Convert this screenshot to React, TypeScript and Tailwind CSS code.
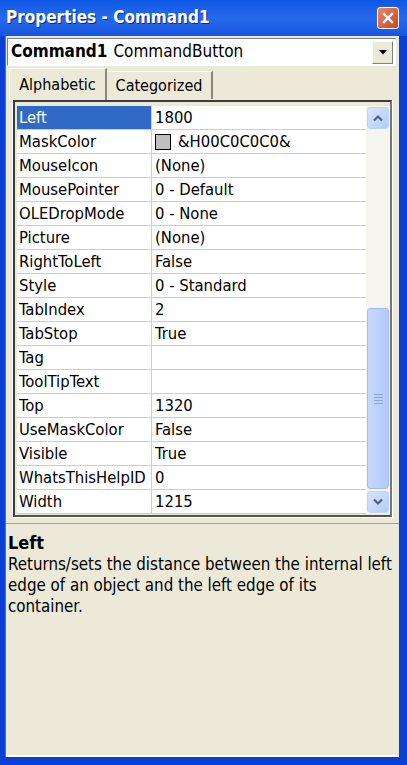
import React from "react";

const rows: [string, string][] = [
  ["Left", "1800"],
  ["MaskColor", "&H00C0C0C0&"],
  ["MouseIcon", "(None)"],
  ["MousePointer", "0 - Default"],
  ["OLEDropMode", "0 - None"],
  ["Picture", "(None)"],
  ["RightToLeft", "False"],
  ["Style", "0 - Standard"],
  ["TabIndex", "2"],
  ["TabStop", "True"],
  ["Tag", ""],
  ["ToolTipText", ""],
  ["Top", "1320"],
  ["UseMaskColor", "False"],
  ["Visible", "True"],
  ["WhatsThisHelpID", "0"],
  ["Width", "1215"],
];

function Chevron({ up }: { up?: boolean }) {
  return (
    <svg width="12" height="8" viewBox="0 0 12 8">
      <path
        d={up ? "M2 6.5 L6 2.5 L10 6.5" : "M2 1.5 L6 5.5 L10 1.5"}
        fill="none"
        stroke="#4d6185"
        strokeWidth="2.2"
      />
    </svg>
  );
}

export default function App() {
  return (
    <div
      className="w-[407px] h-[765px] bg-[#0a3fd6] flex flex-col overflow-hidden"
      style={{ fontFamily: "'DejaVu Sans Condensed', 'Liberation Sans', sans-serif" }}
    >
      {/* Title bar */}
      <div className="h-[36px] shrink-0 flex items-center justify-between pl-[6px] pr-[8px] bg-gradient-to-b from-[#0b58e4] via-[#2769ec] to-[#1656e0]">
        <span
          className="text-white font-bold text-[17px]"
          style={{ textShadow: "1px 1px 0 #0a2a8a" }}
        >
          Properties - Command1
        </span>
        <div className="w-[22px] h-[22px] rounded-[3px] border border-white bg-gradient-to-br from-[#e8866a] to-[#c9461f] flex items-center justify-center">
          <svg width="12" height="12" viewBox="0 0 12 12">
            <path d="M2 2 L10 10 M10 2 L2 10" stroke="white" strokeWidth="2.4" strokeLinecap="square" />
          </svg>
        </div>
      </div>

      {/* Body */}
      <div className="flex-1 ml-[5px] mr-[8px] mb-[8px] bg-[#ece9d8] flex flex-col border-l border-[#4a6fe0]">
        {/* Object dropdown */}
        <div className="mt-[2px] ml-[1px] mr-[3px] h-[28px] bg-white border border-[#7f7f7f] border-r-white border-b-white flex items-center">
          <div className="flex-1 flex items-center pl-[3px] text-[17px] text-black">
            <span className="font-bold">Command1</span>
            <span className="ml-[6px]">CommandButton</span>
          </div>
          <div className="w-[21px] h-[23px] mr-[2px] bg-[#ece9d8] border border-white border-r-[#808080] border-b-[#808080] flex items-center justify-center">
            <svg width="8" height="5" viewBox="0 0 8 5">
              <path d="M0 0 H8 L4 4.5 Z" fill="#000" />
            </svg>
          </div>
        </div>

        {/* Tabs */}
        <div className="flex items-end h-[34px] pl-[3px]">
          <div className="h-[32px] w-[98px] border-t border-l border-white border-r-2 border-r-[#8a877c] flex items-center justify-center text-[16px] text-black bg-[#ece9d8] relative z-10">
            Alphabetic
          </div>
          <div className="h-[28px] w-[106px] border-t border-white border-r-2 border-r-[#8a877c] flex items-center justify-center text-[16px] text-black mb-[1px]">
            Categorized
          </div>
        </div>

        {/* Grid */}
        <div className="ml-[6px] mr-[6px] border border-white border-t-0">
          <div className="border-2 border-[#3c3c3c] border-r-[#777] border-b-[#555] bg-[#ece9d8] pl-[2px] pt-[4px] pb-[1px] flex">
            <div className="flex-1 bg-white">
              {rows.map(([name, value], i) => (
                <div key={name} className="h-[24px] flex border-b border-[#cfcdc4] text-[16.5px] leading-[23px]">
                  <div
                    className={
                      i === 0
                        ? "w-[134px] pl-[2px] bg-[#3169c6] text-white whitespace-nowrap overflow-hidden"
                        : "w-[134px] pl-[2px] text-black whitespace-nowrap overflow-hidden"
                    }
                  >
                    {name}
                  </div>
                  <div className="w-px bg-[#cfcdc4]" />
                  <div className="flex-1 pl-[3px] text-black flex items-center">
                    {name === "MaskColor" && (
                      <span className="inline-block w-[16px] h-[16px] bg-[#c0c0c0] border border-black mr-[7px]" />
                    )}
                    {value}
                  </div>
                </div>
              ))}
            </div>
            {/* Scrollbar */}
            <div className="w-[24px] bg-[#f6f5f0] flex flex-col items-center py-[1px]">
              <div className="w-[22px] h-[22px] rounded-[3px] bg-gradient-to-br from-[#d6e4fd] to-[#b6cdf9] border border-[#c2d3f7] flex items-center justify-center">
                <Chevron up />
              </div>
              <div className="flex-1" />
              <div className="w-[22px] h-[181px] rounded-[3px] bg-gradient-to-r from-[#c5d7fb] via-[#bdd1fb] to-[#b3c9f7] border border-[#a6bcec] flex flex-col items-center justify-center gap-[2px]">
                <div className="w-[9px] h-px bg-[#8ea6d8]" />
                <div className="w-[9px] h-px bg-[#8ea6d8]" />
                <div className="w-[9px] h-px bg-[#8ea6d8]" />
                <div className="w-[9px] h-px bg-[#8ea6d8]" />
              </div>
              <div className="w-[22px] h-[22px] mt-[2px] rounded-[3px] bg-gradient-to-br from-[#d6e4fd] to-[#b6cdf9] border border-[#c2d3f7] flex items-center justify-center">
                <Chevron />
              </div>
            </div>
          </div>
        </div>

        {/* Description */}
        <div className="mt-[5px] border-t border-[#a5a295] h-px bg-white" />
        <div className="flex-1 pl-[2px] pr-[5px] pt-[9px] text-black border-b-2 border-white">
          <div className="font-bold text-[18px] leading-[20px]">Left</div>
          <div className="text-[16.8px] leading-[21px] mt-[1px]">
            Returns/sets the distance between the internal left edge of an object and the left edge of its container.
          </div>
        </div>
      </div>
    </div>
  );
}
